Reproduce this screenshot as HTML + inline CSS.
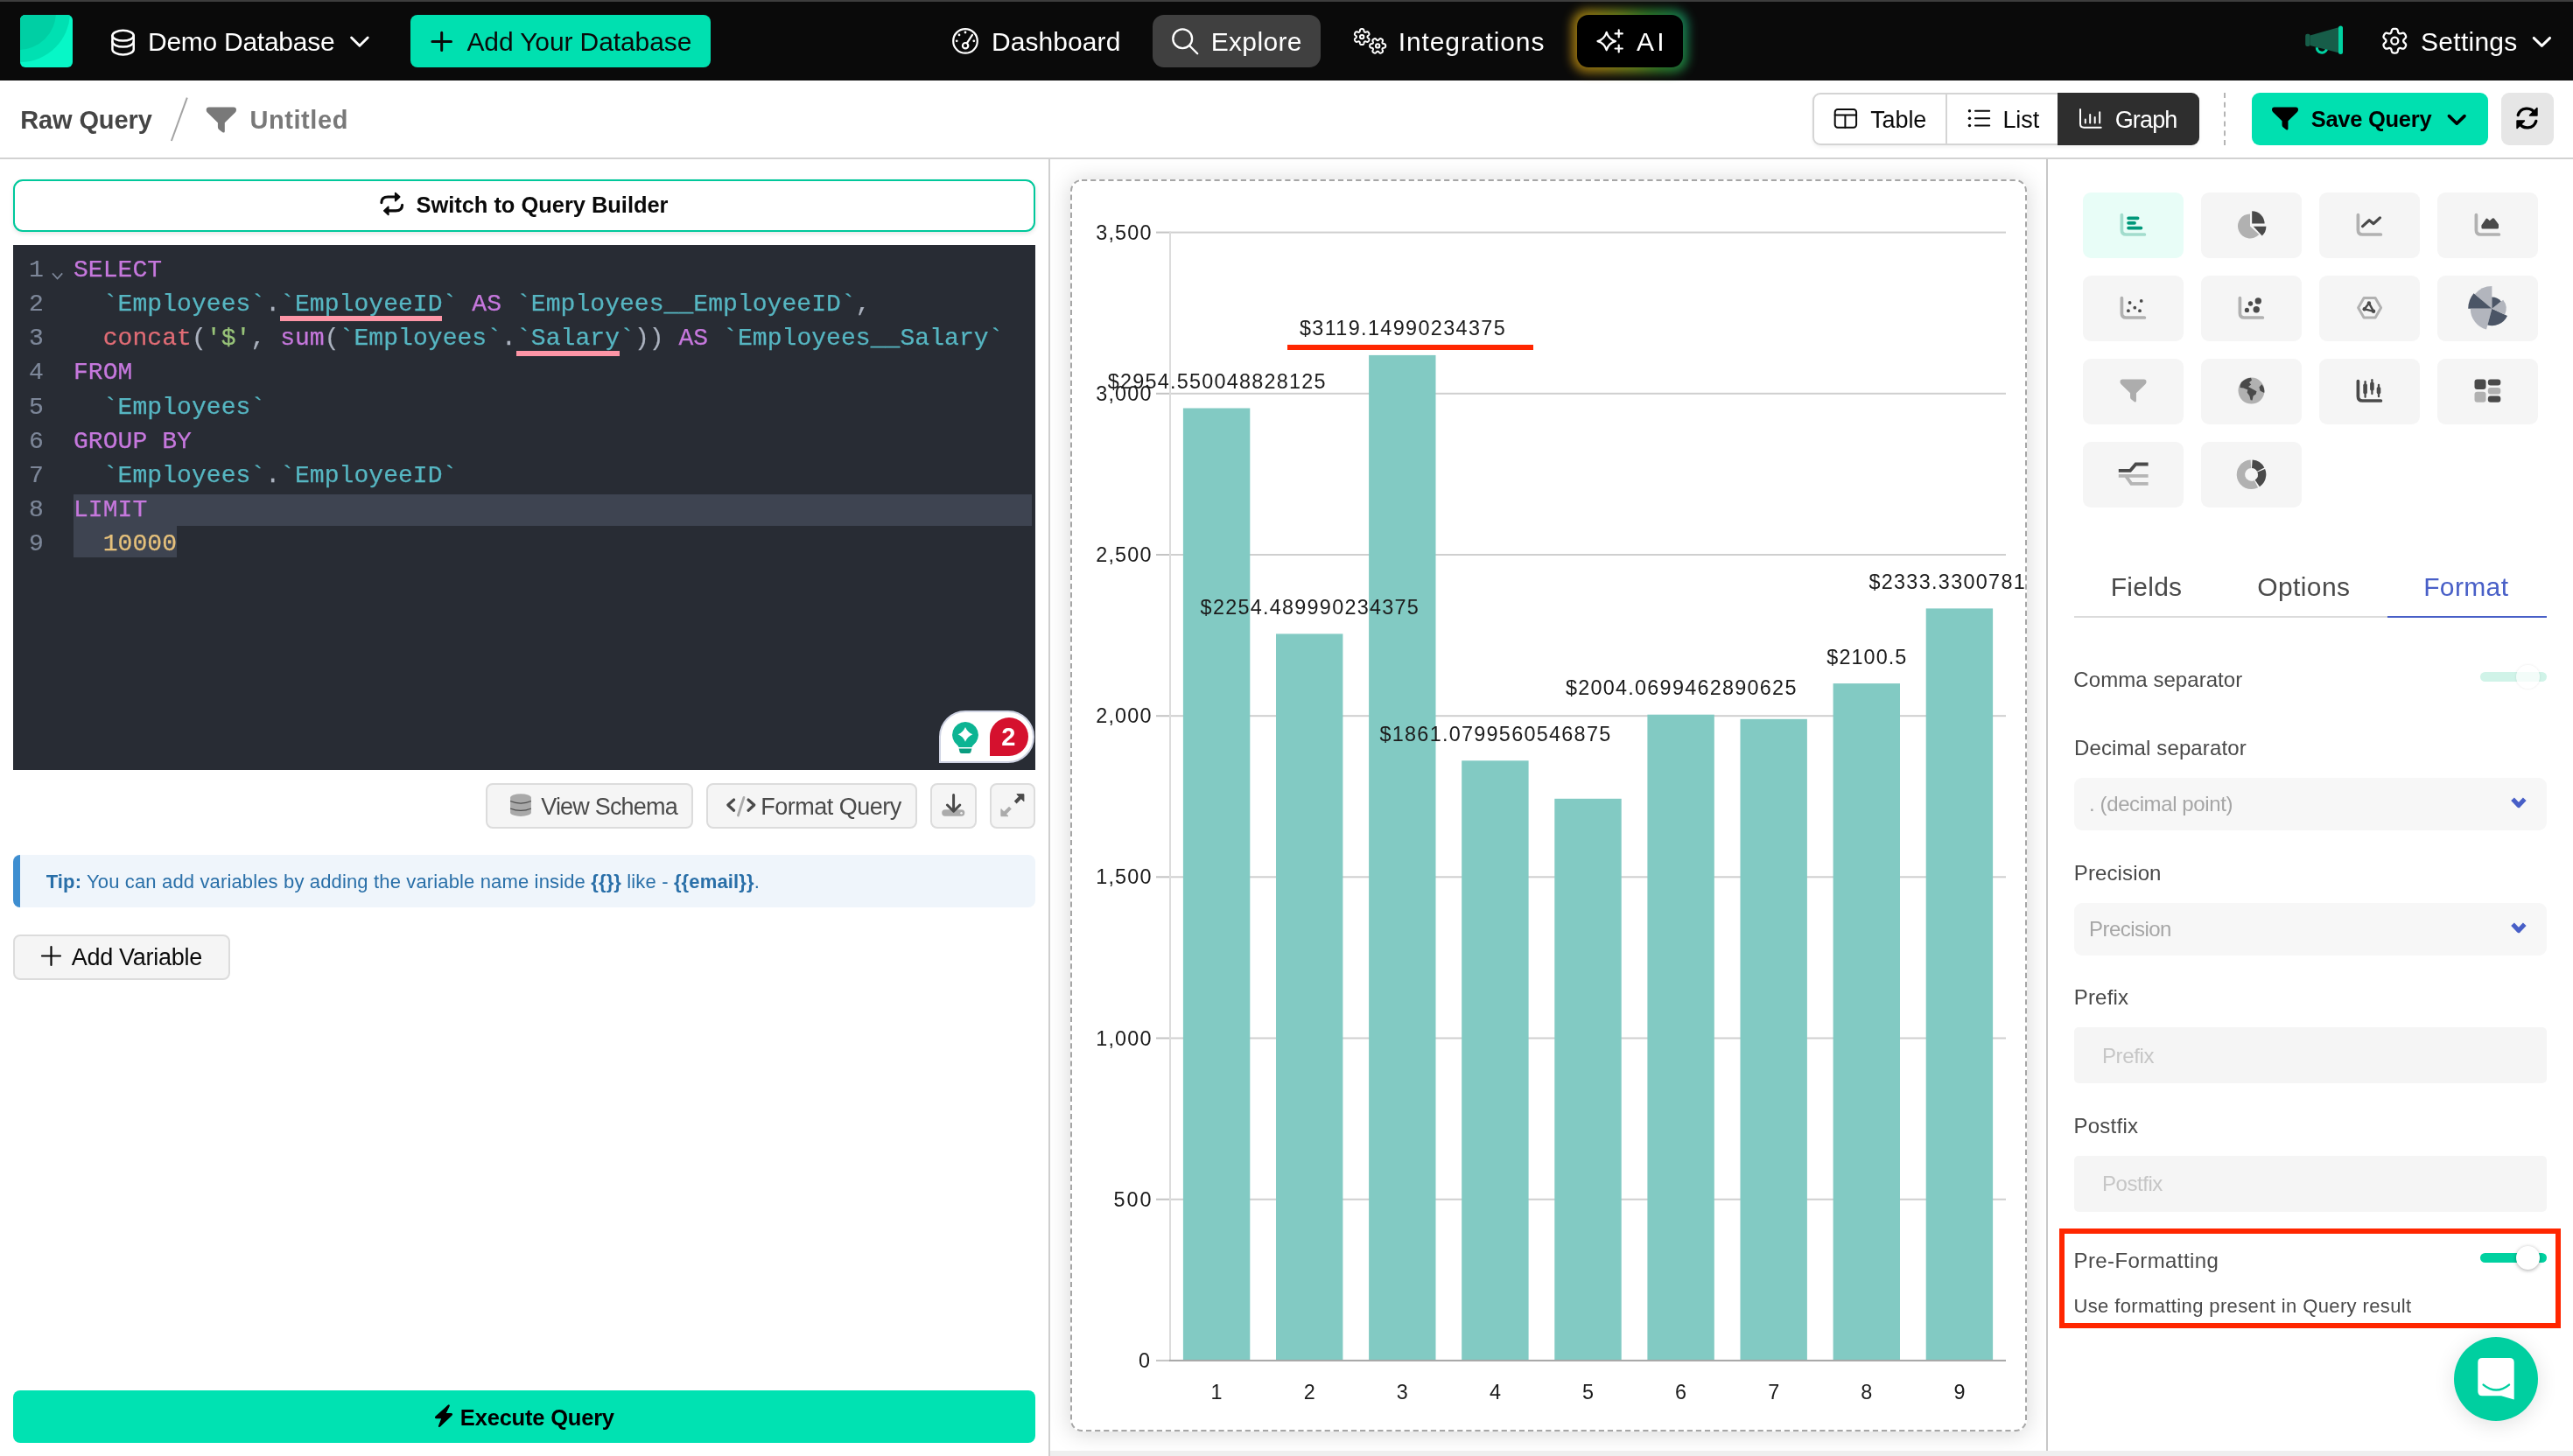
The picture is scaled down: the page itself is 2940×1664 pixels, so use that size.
<!DOCTYPE html>
<html lang="en"><head><meta charset="utf-8"><title>Draxlr - Raw Query</title>
<style>
*{box-sizing:border-box;margin:0;padding:0}
html,body{width:2940px;height:1664px;overflow:hidden;background:#fff}
body{position:relative;will-change:transform;font-family:"Liberation Sans",sans-serif}
div,span,svg,nav,header,section,aside,main,button,label,p,h1,a{position:absolute;display:block}
.t{white-space:pre;line-height:1}
.t b,.t span{position:static;display:inline}
button{border:0;background:none;font:inherit}
</style></head>
<body>
<div style="left:0px;top:0px;width:2940px;height:2px;background:#3d3d3d"></div>
<nav style="left:0px;top:2px;width:2940px;height:90px;background:#0a0a0a"></nav>
<div style="left:23px;top:17px;width:60px;height:60px;border-radius:6px;overflow:hidden;background:#07f7c7"><div style="left:-57px;top:-60px;width:114px;height:114px;border-radius:50%;background:#00e0b2"></div><div style="left:-45px;top:-46px;width:86px;height:86px;border-radius:50%;background:#00cfa4"></div></div>
<span class="t" id="demo" style="left:169.00px;top:32.61px;font:400 30px/1 'Liberation Sans', sans-serif;color:#fff;letter-spacing:-0.268px;">Demo Database</span>
<button style="left:469px;top:17px;width:343px;height:60px;background:#00e0b0;border-radius:8px"></button>
<span class="t" id="adddb" style="left:533.40px;top:32.61px;font:400 30px/1 'Liberation Sans', sans-serif;color:#0a0a0a;letter-spacing:-0.101px;">Add Your Database</span>
<span class="t" id="dash" style="left:1133.00px;top:32.61px;font:400 30px/1 'Liberation Sans', sans-serif;color:#fff;letter-spacing:0.075px;">Dashboard</span>
<div style="left:1317px;top:17px;width:192px;height:60px;background:#404040;border-radius:13px"></div>
<span class="t" id="expl" style="left:1383.70px;top:32.61px;font:400 30px/1 'Liberation Sans', sans-serif;color:#fff;letter-spacing:0.333px;">Explore</span>
<span class="t" id="integ" style="left:1597.70px;top:32.61px;font:400 30px/1 'Liberation Sans', sans-serif;color:#fff;letter-spacing:0.909px;">Integrations</span>
<div style="left:1796px;top:11px;width:133px;height:72px;border-radius:18px;background:linear-gradient(75deg,#c48a10 0%,#b89a16 25%,#86a622 48%,#3a9c32 68%,#1f9a52 88%,#149a80 100%);filter:blur(6px);opacity:.8"></div>
<div style="left:1802px;top:17px;width:121px;height:60px;background:#000;border-radius:13px"></div>
<span class="t" id="ai" style="left:1870.00px;top:32.61px;font:400 30px/1 'Liberation Sans', sans-serif;color:#fff;letter-spacing:3.200px;">AI</span>
<span class="t" id="sett" style="left:2766.10px;top:32.61px;font:400 30px/1 'Liberation Sans', sans-serif;color:#fff;letter-spacing:0.258px;">Settings</span>
<div style="left:0px;top:180px;width:2940px;height:2px;background:#d2d2d2"></div>
<h1 class="t" id="rawq" style="left:23.26px;top:123.45px;font:700 29px/1 'Liberation Sans', sans-serif;color:#454545;letter-spacing:-0.124px;">Raw Query</h1>
<span class="t" id="untl" style="left:285.46px;top:123.45px;font:700 29px/1 'Liberation Sans', sans-serif;color:#797979;letter-spacing:0.571px;">Untitled</span>
<div style="left:2071px;top:106px;width:442px;height:60px;background:#fff;border:2px solid #d4d4d4;border-radius:9px;box-shadow:0 2px 4px rgba(0,0,0,.06)"></div>
<div style="left:2223px;top:108px;width:2px;height:56px;background:#d4d4d4"></div>
<div style="left:2351px;top:106px;width:162px;height:60px;background:#2e2e2e;border-radius:0 9px 9px 0"></div>
<span class="t" id="tabl" style="left:2137.18px;top:123.54px;font:400 27px/1 'Liberation Sans', sans-serif;color:#0a0a0a;letter-spacing:-0.100px;">Table</span>
<span class="t" id="list" style="left:2288.38px;top:123.54px;font:400 27px/1 'Liberation Sans', sans-serif;color:#0a0a0a;letter-spacing:-0.068px;">List</span>
<span class="t" id="grph" style="left:2416.68px;top:123.54px;font:400 27px/1 'Liberation Sans', sans-serif;color:#fff;letter-spacing:-0.850px;">Graph</span>
<div style="left:2541px;top:106px;width:0px;height:60px;border-left:2px dashed #b5b5b5"></div>
<button style="left:2573px;top:106px;width:270px;height:60px;background:#00e0b0;border-radius:9px"></button>
<span class="t" id="save" style="left:2640.67px;top:124.41px;font:700 25.5px/1 'Liberation Sans', sans-serif;color:#000;letter-spacing:-0.267px;">Save Query</span>
<button style="left:2858px;top:106px;width:60px;height:60px;background:#e6e6e6;border-radius:9px"></button>
<div style="left:1198px;top:182px;width:2px;height:1482px;background:#d0d0d0"></div>
<button style="left:15px;top:205px;width:1168px;height:60px;background:#fff;border:2px solid #00c89b;border-radius:11px;box-shadow:0 2px 5px rgba(0,0,0,.10)"></button>
<span class="t" id="swit" style="left:475.47px;top:221.71px;font:700 25.5px/1 'Liberation Sans', sans-serif;color:#0a0a0a;letter-spacing:-0.045px;">Switch to Query Builder</span>
<div style="left:15px;top:280px;width:1168px;height:600px;background:#282c34"></div>
<div style="left:84px;top:565px;width:1095px;height:36px;background:#3e4451"></div>
<div style="left:84px;top:601px;width:118px;height:36px;background:#3e4451"></div>
<span class="t" id="ln1" style="left:33px;top:294.72px;font:400 28px/1 'Liberation Mono', monospace;color:#7d8799;letter-spacing:0.06px;-webkit-text-stroke:0.2px">1</span>
<span class="t" id="cl1" style="left:84px;top:294.72px;font:400 28px/1 'Liberation Mono', monospace;color:#abb2bf;letter-spacing:0.06px;-webkit-text-stroke:0.25px"><span style="color:#c678dd">SELECT</span></span>
<span class="t" id="ln2" style="left:33px;top:333.92px;font:400 28px/1 'Liberation Mono', monospace;color:#7d8799;letter-spacing:0.06px;-webkit-text-stroke:0.2px">2</span>
<span class="t" id="cl2" style="left:84px;top:333.92px;font:400 28px/1 'Liberation Mono', monospace;color:#abb2bf;letter-spacing:0.06px;-webkit-text-stroke:0.25px"><span style="color:#abb2bf">  </span><span style="color:#56b6c2">`Employees`</span><span style="color:#abb2bf">.</span><span style="color:#56b6c2">`EmployeeID`</span><span style="color:#abb2bf"> </span><span style="color:#c678dd">AS</span><span style="color:#abb2bf"> </span><span style="color:#56b6c2">`Employees__EmployeeID`</span><span style="color:#abb2bf">,</span></span>
<span class="t" id="ln3" style="left:33px;top:373.12px;font:400 28px/1 'Liberation Mono', monospace;color:#7d8799;letter-spacing:0.06px;-webkit-text-stroke:0.2px">3</span>
<span class="t" id="cl3" style="left:84px;top:373.12px;font:400 28px/1 'Liberation Mono', monospace;color:#abb2bf;letter-spacing:0.06px;-webkit-text-stroke:0.25px"><span style="color:#abb2bf">  </span><span style="color:#e06c75">concat</span><span style="color:#abb2bf">(</span><span style="color:#98c379">&#x27;$&#x27;</span><span style="color:#abb2bf">, </span><span style="color:#c678dd">sum</span><span style="color:#abb2bf">(</span><span style="color:#56b6c2">`Employees`</span><span style="color:#abb2bf">.</span><span style="color:#56b6c2">`Salary`</span><span style="color:#abb2bf">)) </span><span style="color:#c678dd">AS</span><span style="color:#abb2bf"> </span><span style="color:#56b6c2">`Employees__Salary`</span></span>
<span class="t" id="ln4" style="left:33px;top:412.32px;font:400 28px/1 'Liberation Mono', monospace;color:#7d8799;letter-spacing:0.06px;-webkit-text-stroke:0.2px">4</span>
<span class="t" id="cl4" style="left:84px;top:412.32px;font:400 28px/1 'Liberation Mono', monospace;color:#abb2bf;letter-spacing:0.06px;-webkit-text-stroke:0.25px"><span style="color:#c678dd">FROM</span></span>
<span class="t" id="ln5" style="left:33px;top:451.52px;font:400 28px/1 'Liberation Mono', monospace;color:#7d8799;letter-spacing:0.06px;-webkit-text-stroke:0.2px">5</span>
<span class="t" id="cl5" style="left:84px;top:451.52px;font:400 28px/1 'Liberation Mono', monospace;color:#abb2bf;letter-spacing:0.06px;-webkit-text-stroke:0.25px"><span style="color:#abb2bf">  </span><span style="color:#56b6c2">`Employees`</span></span>
<span class="t" id="ln6" style="left:33px;top:490.72px;font:400 28px/1 'Liberation Mono', monospace;color:#7d8799;letter-spacing:0.06px;-webkit-text-stroke:0.2px">6</span>
<span class="t" id="cl6" style="left:84px;top:490.72px;font:400 28px/1 'Liberation Mono', monospace;color:#abb2bf;letter-spacing:0.06px;-webkit-text-stroke:0.25px"><span style="color:#c678dd">GROUP BY</span></span>
<span class="t" id="ln7" style="left:33px;top:529.92px;font:400 28px/1 'Liberation Mono', monospace;color:#7d8799;letter-spacing:0.06px;-webkit-text-stroke:0.2px">7</span>
<span class="t" id="cl7" style="left:84px;top:529.92px;font:400 28px/1 'Liberation Mono', monospace;color:#abb2bf;letter-spacing:0.06px;-webkit-text-stroke:0.25px"><span style="color:#abb2bf">  </span><span style="color:#56b6c2">`Employees`</span><span style="color:#abb2bf">.</span><span style="color:#56b6c2">`EmployeeID`</span></span>
<span class="t" id="ln8" style="left:33px;top:569.12px;font:400 28px/1 'Liberation Mono', monospace;color:#7d8799;letter-spacing:0.06px;-webkit-text-stroke:0.2px">8</span>
<span class="t" id="cl8" style="left:84px;top:569.12px;font:400 28px/1 'Liberation Mono', monospace;color:#abb2bf;letter-spacing:0.06px;-webkit-text-stroke:0.25px"><span style="color:#c678dd">LIMIT</span></span>
<span class="t" id="ln9" style="left:33px;top:608.32px;font:400 28px/1 'Liberation Mono', monospace;color:#7d8799;letter-spacing:0.06px;-webkit-text-stroke:0.2px">9</span>
<span class="t" id="cl9" style="left:84px;top:608.32px;font:400 28px/1 'Liberation Mono', monospace;color:#abb2bf;letter-spacing:0.06px;-webkit-text-stroke:0.25px"><span style="color:#abb2bf">  </span><span style="color:#e5c07b">10000</span></span>
<div style="left:320.03999999999996px;top:361px;width:185.45999999999998px;height:6px;background:#fd95a6"></div>
<div style="left:589.8px;top:400.5px;width:118.02px;height:6px;background:#fd95a6"></div>
<button style="left:555px;top:895px;width:237px;height:52px;background:#f5f5f5;border:2px solid #dcdcdc;border-radius:8px"></button>
<span class="t" id="vsch" style="left:618.18px;top:908.64px;font:400 27px/1 'Liberation Sans', sans-serif;color:#4a4a4a;letter-spacing:-0.800px;">View Schema</span>
<button style="left:807px;top:895px;width:241px;height:52px;background:#f5f5f5;border:2px solid #dcdcdc;border-radius:8px"></button>
<span class="t" id="fmtq" style="left:869.18px;top:908.64px;font:400 27px/1 'Liberation Sans', sans-serif;color:#4a4a4a;letter-spacing:-0.489px;">Format Query</span>
<button style="left:1063px;top:895px;width:53px;height:52px;background:#f5f5f5;border:2px solid #dcdcdc;border-radius:8px"></button>
<button style="left:1131px;top:895px;width:52px;height:52px;background:#f5f5f5;border:2px solid #dcdcdc;border-radius:8px"></button>
<div style="left:15px;top:977px;width:1168px;height:60px;background:#eff5fb;border-left:8px solid #3e8ed0;border-radius:8px"></div>
<p class="t" id="tip" style="left:52.68px;top:996.98px;font:400 22px/1 'Liberation Sans', sans-serif;color:#296fa8;letter-spacing:0.145px;"><b>Tip:</b> You can add variables by adding the variable name inside <b>{{}}</b> like - <b>{{email}}</b>.</p>
<button style="left:15px;top:1068px;width:248px;height:52px;background:#f5f5f5;border:2px solid #dcdcdc;border-radius:8px"></button>
<span class="t" id="addv" style="left:81.68px;top:1081.14px;font:400 27px/1 'Liberation Sans', sans-serif;color:#0a0a0a;letter-spacing:-0.273px;">Add Variable</span>
<button style="left:15px;top:1589px;width:1168px;height:60px;background:#00e2b2;border-radius:8px"></button>
<span class="t" id="exec" style="left:525.87px;top:1608.11px;font:700 25.5px/1 'Liberation Sans', sans-serif;color:#000;letter-spacing:-0.200px;">Execute Query</span>
<div style="left:1223px;top:205px;width:1093px;height:1431px;background:#fff;border-radius:13px;box-shadow:0 2px 26px rgba(0,0,0,.17)"></div>
<svg class="i" style="left:1223px;top:205px;" width="1093" height="1431" viewBox="1223 205 1093 1431"><rect x="1224" y="206" width="1091" height="1429" rx="12" fill="none" stroke="#a6a6a6" stroke-width="2" stroke-dasharray="6.2 3.9"/></svg>
<div style="left:1200px;top:1658px;width:1740px;height:6px;background:#efefef"></div>
<div style="left:2338px;top:182px;width:2px;height:1476px;background:#c8c8c8"></div>
<div style="left:2340px;top:182px;width:600px;height:1476px;background:#fff"></div>
<svg class="i" style="left:1225px;top:207px;overflow:hidden;border-radius:11px" width="1089" height="1427" viewBox="1225 207 1089 1427"><rect x="1321" y="1553.9" width="16" height="2" fill="#c4c4c4"/><text x="1301.1" y="1562.9" textLength="14.3" lengthAdjust="spacing" font-family="Liberation Sans, sans-serif" font-size="23.4" fill="#1c1c1c">0</text><rect x="1337" y="1369.7" width="955" height="2" fill="#cfcfcf"/><rect x="1321" y="1369.7" width="16" height="2" fill="#c4c4c4"/><text x="1272.5" y="1378.7" textLength="42.9" lengthAdjust="spacing" font-family="Liberation Sans, sans-serif" font-size="23.4" fill="#1c1c1c">500</text><rect x="1337" y="1185.5" width="955" height="2" fill="#cfcfcf"/><rect x="1321" y="1185.5" width="16" height="2" fill="#c4c4c4"/><text x="1252.3" y="1194.5" textLength="63.1" lengthAdjust="spacing" font-family="Liberation Sans, sans-serif" font-size="23.4" fill="#1c1c1c">1,000</text><rect x="1337" y="1001.3" width="955" height="2" fill="#cfcfcf"/><rect x="1321" y="1001.3" width="16" height="2" fill="#c4c4c4"/><text x="1252.3" y="1010.3" textLength="63.1" lengthAdjust="spacing" font-family="Liberation Sans, sans-serif" font-size="23.4" fill="#1c1c1c">1,500</text><rect x="1337" y="817.2" width="955" height="2" fill="#cfcfcf"/><rect x="1321" y="817.2" width="16" height="2" fill="#c4c4c4"/><text x="1252.3" y="826.2" textLength="63.1" lengthAdjust="spacing" font-family="Liberation Sans, sans-serif" font-size="23.4" fill="#1c1c1c">2,000</text><rect x="1337" y="633.0" width="955" height="2" fill="#cfcfcf"/><rect x="1321" y="633.0" width="16" height="2" fill="#c4c4c4"/><text x="1252.3" y="642.0" textLength="63.1" lengthAdjust="spacing" font-family="Liberation Sans, sans-serif" font-size="23.4" fill="#1c1c1c">2,500</text><rect x="1337" y="448.8" width="955" height="2" fill="#cfcfcf"/><rect x="1321" y="448.8" width="16" height="2" fill="#c4c4c4"/><text x="1252.3" y="457.8" textLength="63.1" lengthAdjust="spacing" font-family="Liberation Sans, sans-serif" font-size="23.4" fill="#1c1c1c">3,000</text><rect x="1337" y="264.6" width="955" height="2" fill="#cfcfcf"/><rect x="1321" y="264.6" width="16" height="2" fill="#c4c4c4"/><text x="1252.3" y="273.6" textLength="63.1" lengthAdjust="spacing" font-family="Liberation Sans, sans-serif" font-size="23.4" fill="#1c1c1c">3,500</text><rect x="1336" y="264.5" width="2" height="1290.4" fill="#dcdcdc"/><rect x="1351.9" y="466.5" width="76.4" height="1088.4" fill="#82cac3"/><rect x="1458.0" y="724.4" width="76.4" height="830.5" fill="#82cac3"/><rect x="1564.1" y="405.9" width="76.4" height="1149.0" fill="#82cac3"/><rect x="1670.2" y="869.3" width="76.4" height="685.6" fill="#82cac3"/><rect x="1776.3" y="912.8" width="76.4" height="642.1" fill="#82cac3"/><rect x="1882.4" y="816.7" width="76.4" height="738.2" fill="#82cac3"/><rect x="1988.5" y="821.8" width="76.4" height="733.1" fill="#82cac3"/><rect x="2094.6" y="781.1" width="76.4" height="773.8" fill="#82cac3"/><rect x="2200.7" y="695.4" width="76.4" height="859.5" fill="#82cac3"/><rect x="1336" y="1553.9" width="956" height="2" fill="#a6a6a6"/><text x="1390.1" y="1599" text-anchor="middle" font-family="Liberation Sans, sans-serif" font-size="23.4" fill="#1c1c1c">1</text><text x="1265.7" y="443.9" textLength="248.7" lengthAdjust="spacing" font-family="Liberation Sans, sans-serif" font-size="23.4" fill="#1c1c1c">$2954.550048828125</text><text x="1496.2" y="1599" text-anchor="middle" font-family="Liberation Sans, sans-serif" font-size="23.4" fill="#1c1c1c">2</text><text x="1371.6" y="701.8" textLength="249.2" lengthAdjust="spacing" font-family="Liberation Sans, sans-serif" font-size="23.4" fill="#1c1c1c">$2254.489990234375</text><text x="1602.3" y="1599" text-anchor="middle" font-family="Liberation Sans, sans-serif" font-size="23.4" fill="#1c1c1c">3</text><text x="1484.9" y="383.3" textLength="234.8" lengthAdjust="spacing" font-family="Liberation Sans, sans-serif" font-size="23.4" fill="#1c1c1c">$3119.14990234375</text><text x="1708.4" y="1599" text-anchor="middle" font-family="Liberation Sans, sans-serif" font-size="23.4" fill="#1c1c1c">4</text><text x="1576.5" y="846.7" textLength="263.7" lengthAdjust="spacing" font-family="Liberation Sans, sans-serif" font-size="23.4" fill="#1c1c1c">$1861.0799560546875</text><text x="1814.5" y="1599" text-anchor="middle" font-family="Liberation Sans, sans-serif" font-size="23.4" fill="#1c1c1c">5</text><text x="1920.6" y="1599" text-anchor="middle" font-family="Liberation Sans, sans-serif" font-size="23.4" fill="#1c1c1c">6</text><text x="1788.9" y="794.1" textLength="263.5" lengthAdjust="spacing" font-family="Liberation Sans, sans-serif" font-size="23.4" fill="#1c1c1c">$2004.0699462890625</text><text x="2026.7" y="1599" text-anchor="middle" font-family="Liberation Sans, sans-serif" font-size="23.4" fill="#1c1c1c">7</text><text x="2132.8" y="1599" text-anchor="middle" font-family="Liberation Sans, sans-serif" font-size="23.4" fill="#1c1c1c">8</text><text x="2087.3" y="758.5" textLength="91" lengthAdjust="spacing" font-family="Liberation Sans, sans-serif" font-size="23.4" fill="#1c1c1c">$2100.5</text><text x="2238.9" y="1599" text-anchor="middle" font-family="Liberation Sans, sans-serif" font-size="23.4" fill="#1c1c1c">9</text><text x="2135.4" y="672.8" textLength="207" lengthAdjust="spacing" font-family="Liberation Sans, sans-serif" font-size="23.4" fill="#1c1c1c">$2333.330078125</text><rect x="1471" y="394" width="281" height="6" fill="#ff2600"/></svg>
<div style="left:2380px;top:220px;width:115px;height:75px;background:#e8fdf7;border-radius:9px"></div>
<div style="left:2515px;top:220px;width:115px;height:75px;background:#f5f5f5;border-radius:9px"></div>
<div style="left:2650px;top:220px;width:115px;height:75px;background:#f5f5f5;border-radius:9px"></div>
<div style="left:2785px;top:220px;width:115px;height:75px;background:#f5f5f5;border-radius:9px"></div>
<div style="left:2380px;top:315px;width:115px;height:75px;background:#f5f5f5;border-radius:9px"></div>
<div style="left:2515px;top:315px;width:115px;height:75px;background:#f5f5f5;border-radius:9px"></div>
<div style="left:2650px;top:315px;width:115px;height:75px;background:#f5f5f5;border-radius:9px"></div>
<div style="left:2785px;top:315px;width:115px;height:75px;background:#f5f5f5;border-radius:9px"></div>
<div style="left:2380px;top:410px;width:115px;height:75px;background:#f5f5f5;border-radius:9px"></div>
<div style="left:2515px;top:410px;width:115px;height:75px;background:#f5f5f5;border-radius:9px"></div>
<div style="left:2650px;top:410px;width:115px;height:75px;background:#f5f5f5;border-radius:9px"></div>
<div style="left:2785px;top:410px;width:115px;height:75px;background:#f5f5f5;border-radius:9px"></div>
<div style="left:2380px;top:505px;width:115px;height:75px;background:#f5f5f5;border-radius:9px"></div>
<div style="left:2515px;top:505px;width:115px;height:75px;background:#f5f5f5;border-radius:9px"></div>
<div style="left:2370px;top:704px;width:540px;height:2px;background:#dbdbdb"></div>
<div style="left:2728px;top:704px;width:182px;height:2px;background:#485fc7"></div>
<span class="t" id="tfld" style="left:2411.70px;top:656.21px;font:400 30px/1 'Liberation Sans', sans-serif;color:#4a4a4a;letter-spacing:0.280px;">Fields</span>
<span class="t" id="topt" style="left:2579.20px;top:656.21px;font:400 30px/1 'Liberation Sans', sans-serif;color:#4a4a4a;letter-spacing:0.401px;">Options</span>
<span class="t" id="tfmt" style="left:2769.20px;top:656.21px;font:400 30px/1 'Liberation Sans', sans-serif;color:#485fc7;letter-spacing:0.360px;">Format</span>
<label class="t" id="lcom" style="left:2369.36px;top:764.68px;font:400 24px/1 'Liberation Sans', sans-serif;color:#4a4a4a;letter-spacing:0.057px;">Comma separator</label>
<label class="t" id="ldec" style="left:2369.96px;top:842.68px;font:400 24px/1 'Liberation Sans', sans-serif;color:#4a4a4a;letter-spacing:0.124px;">Decimal separator</label>
<div style="left:2370px;top:889px;width:540px;height:60px;background:#f7f7f7;border-radius:9px"></div>
<span class="t" id="sdec" style="left:2387.06px;top:906.88px;font:400 24px/1 'Liberation Sans', sans-serif;color:#a6a6a6;letter-spacing:-0.399px;">. (decimal point)</span>
<label class="t" id="lpre" style="left:2369.76px;top:985.68px;font:400 24px/1 'Liberation Sans', sans-serif;color:#4a4a4a;letter-spacing:0.125px;">Precision</label>
<div style="left:2370px;top:1032px;width:540px;height:60px;background:#f7f7f7;border-radius:9px"></div>
<span class="t" id="spre" style="left:2387.06px;top:1049.68px;font:400 24px/1 'Liberation Sans', sans-serif;color:#a6a6a6;letter-spacing:-0.552px;">Precision</span>
<label class="t" id="lpfx" style="left:2369.76px;top:1127.68px;font:400 24px/1 'Liberation Sans', sans-serif;color:#4a4a4a;letter-spacing:0.180px;">Prefix</label>
<div style="left:2370px;top:1174px;width:540px;height:64px;background:#f5f5f5;border-radius:5px"></div>
<span class="t" id="ppfx" style="left:2401.96px;top:1195.38px;font:400 24px/1 'Liberation Sans', sans-serif;color:#c6c6c6;letter-spacing:-0.360px;">Prefix</span>
<label class="t" id="lpst" style="left:2369.56px;top:1275.28px;font:400 24px/1 'Liberation Sans', sans-serif;color:#4a4a4a;letter-spacing:0.233px;">Postfix</label>
<div style="left:2370px;top:1321px;width:540px;height:64px;background:#f5f5f5;border-radius:5px"></div>
<span class="t" id="ppst" style="left:2401.96px;top:1340.68px;font:400 24px/1 'Liberation Sans', sans-serif;color:#c6c6c6;letter-spacing:-0.434px;">Postfix</span>
<div style="left:2353px;top:1404px;width:573px;height:114px;border:6px solid #ff2600"></div>
<label class="t" id="lprf" style="left:2369.56px;top:1428.88px;font:400 24px/1 'Liberation Sans', sans-serif;color:#4a4a4a;letter-spacing:0.400px;">Pre-Formatting</label>
<p class="t" id="luse" style="left:2369.48px;top:1481.58px;font:400 22px/1 'Liberation Sans', sans-serif;color:#4a4a4a;letter-spacing:0.378px;">Use formatting present in Query result</p>
<div style="left:2834px;top:768px;width:76px;height:11px;background:#d0f3e8;border-radius:6px"></div>
<div style="left:2875px;top:760px;width:27px;height:27px;background:rgba(255,255,255,.75);border-radius:50%;box-shadow:0 0 3px rgba(0,0,0,.10)"></div>
<div style="left:2834px;top:1431.5px;width:76px;height:11px;background:#00d1a0;border-radius:6px"></div>
<div style="left:2875px;top:1424.2px;width:27px;height:27px;background:#fff;border-radius:50%;box-shadow:0 1px 4px rgba(0,0,0,.35)"></div>
<div style="left:2804px;top:1528px;width:96px;height:96px;background:#00cfa0;border-radius:50%;box-shadow:0 4px 24px rgba(0,0,0,.12)"></div>
<svg class="i" style="left:124px;top:30px;" width="34" height="38" viewBox="124 30 34 38"><g fill="none" stroke="#fff" stroke-linecap="round" stroke-linejoin="round" stroke-width="2.5"><ellipse cx="140.6" cy="40.7" rx="12.15" ry="5.9"/><path d="M128.45,40.7 V56.5 a12.15,5.9 0 0 0 24.3,0 V40.7"/><path d="M128.45,47.6 a12.15,5.9 0 0 0 24.3,0"/></g></svg>
<svg class="i" style="left:396px;top:38px;" width="30" height="20" viewBox="396 38 30 20"><polyline fill="none" stroke="#fff" stroke-linecap="round" stroke-linejoin="round" stroke-width="2.9" points="401.6,43 410.9,52.2 420.2,43"/></svg>
<svg class="i" style="left:488px;top:32px;" width="34" height="32" viewBox="488 32 34 32"><path d="M493.9,47.4 H515.5 M504.7,37.2 V57.6" stroke="#0a0a0a" stroke-width="3" stroke-linecap="round" fill="none"/></svg>
<svg class="i" style="left:1085px;top:29px;" width="36" height="36" viewBox="1085 29 36 36"><g fill="none" stroke="#fff" stroke-linecap="round" stroke-linejoin="round" stroke-width="2.2"><circle cx="1103" cy="46.9" r="13.8"/><circle cx="1103.1" cy="52.2" r="3.2"/><path d="M1104.8,49.4 L1111,39.8"/></g><g fill="#fff"><circle cx="1093.2" cy="46.8" r="1.4"/><circle cx="1096" cy="39.9" r="1.4"/><circle cx="1103" cy="37" r="1.4"/><circle cx="1112.8" cy="46.8" r="1.4"/></g></svg>
<svg class="i" style="left:1336px;top:29px;" width="36" height="36" viewBox="1336 29 36 36"><g fill="none" stroke="#fff" stroke-linecap="round" stroke-linejoin="round" stroke-width="2.3"><circle cx="1351.2" cy="44.2" r="10.9"/><path d="M1359.2,52.2 L1368.2,61.2"/></g></svg>
<svg class="i" style="left:1543px;top:29px;" width="44" height="36" viewBox="1543 29 44 36"><g fill="none" stroke="#fff" stroke-linecap="round" stroke-linejoin="round" stroke-width="2"><path d="M1562.43,42.10 L1562.45,42.32 L1562.50,42.54 L1562.61,42.77 L1562.80,43.03 L1563.11,43.32 L1563.51,43.65 L1563.94,44.03 L1564.27,44.41 L1564.46,44.78 L1564.51,45.13 L1564.49,45.45 L1564.41,45.75 L1564.30,46.05 L1564.17,46.34 L1564.02,46.61 L1563.85,46.88 L1563.67,47.14 L1563.47,47.38 L1563.24,47.60 L1562.98,47.79 L1562.65,47.91 L1562.24,47.93 L1561.74,47.84 L1561.20,47.66 L1560.71,47.47 L1560.30,47.35 L1559.99,47.31 L1559.73,47.33 L1559.51,47.40 L1559.31,47.49 L1559.13,47.62 L1558.97,47.78 L1558.82,47.99 L1558.70,48.28 L1558.60,48.69 L1558.51,49.21 L1558.40,49.77 L1558.23,50.25 L1558.00,50.59 L1557.74,50.81 L1557.44,50.95 L1557.14,51.04 L1556.83,51.09 L1556.51,51.12 L1556.20,51.12 L1555.89,51.12 L1555.57,51.09 L1555.26,51.04 L1554.96,50.95 L1554.66,50.81 L1554.40,50.59 L1554.17,50.25 L1554.00,49.77 L1553.89,49.21 L1553.80,48.69 L1553.70,48.28 L1553.58,47.99 L1553.43,47.78 L1553.27,47.62 L1553.09,47.49 L1552.89,47.40 L1552.67,47.33 L1552.41,47.31 L1552.10,47.35 L1551.69,47.47 L1551.20,47.66 L1550.66,47.84 L1550.16,47.93 L1549.75,47.91 L1549.42,47.79 L1549.16,47.60 L1548.93,47.38 L1548.73,47.14 L1548.55,46.88 L1548.38,46.61 L1548.23,46.34 L1548.10,46.05 L1547.99,45.75 L1547.91,45.45 L1547.89,45.13 L1547.94,44.78 L1548.13,44.41 L1548.46,44.03 L1548.89,43.65 L1549.29,43.32 L1549.60,43.03 L1549.79,42.77 L1549.90,42.54 L1549.95,42.32 L1549.97,42.10 L1549.95,41.88 L1549.90,41.66 L1549.79,41.43 L1549.60,41.17 L1549.29,40.88 L1548.89,40.55 L1548.46,40.17 L1548.13,39.79 L1547.94,39.42 L1547.89,39.07 L1547.91,38.75 L1547.99,38.45 L1548.10,38.15 L1548.23,37.86 L1548.38,37.59 L1548.55,37.32 L1548.73,37.06 L1548.93,36.82 L1549.16,36.60 L1549.42,36.41 L1549.75,36.29 L1550.16,36.27 L1550.66,36.36 L1551.20,36.54 L1551.69,36.73 L1552.10,36.85 L1552.41,36.89 L1552.67,36.87 L1552.89,36.80 L1553.09,36.71 L1553.27,36.58 L1553.43,36.42 L1553.58,36.21 L1553.70,35.92 L1553.80,35.51 L1553.89,34.99 L1554.00,34.43 L1554.17,33.95 L1554.40,33.61 L1554.66,33.39 L1554.96,33.25 L1555.26,33.16 L1555.57,33.11 L1555.89,33.08 L1556.20,33.08 L1556.51,33.08 L1556.83,33.11 L1557.14,33.16 L1557.44,33.25 L1557.74,33.39 L1558.00,33.61 L1558.23,33.95 L1558.40,34.43 L1558.51,34.99 L1558.60,35.51 L1558.70,35.92 L1558.82,36.21 L1558.97,36.42 L1559.13,36.58 L1559.31,36.71 L1559.51,36.80 L1559.73,36.87 L1559.99,36.89 L1560.30,36.85 L1560.71,36.73 L1561.20,36.54 L1561.74,36.36 L1562.24,36.27 L1562.65,36.29 L1562.98,36.41 L1563.24,36.60 L1563.47,36.82 L1563.67,37.06 L1563.85,37.32 L1564.02,37.59 L1564.17,37.86 L1564.30,38.15 L1564.41,38.45 L1564.49,38.75 L1564.51,39.07 L1564.46,39.42 L1564.27,39.79 L1563.94,40.17 L1563.51,40.55 L1563.11,40.88 L1562.80,41.17 L1562.61,41.43 L1562.50,41.66 L1562.45,41.88Z"/><circle cx="1556.2" cy="42.1" r="2.2"/><path d="M1583.22,52.40 L1583.22,52.71 L1583.19,53.03 L1583.14,53.34 L1583.05,53.64 L1582.91,53.94 L1582.69,54.20 L1582.35,54.43 L1581.87,54.60 L1581.31,54.71 L1580.79,54.80 L1580.38,54.90 L1580.09,55.02 L1579.88,55.17 L1579.72,55.33 L1579.59,55.51 L1579.50,55.71 L1579.43,55.93 L1579.41,56.19 L1579.45,56.50 L1579.57,56.91 L1579.76,57.40 L1579.94,57.94 L1580.03,58.44 L1580.01,58.85 L1579.89,59.18 L1579.70,59.44 L1579.48,59.67 L1579.24,59.87 L1578.98,60.05 L1578.71,60.22 L1578.44,60.37 L1578.15,60.50 L1577.85,60.61 L1577.55,60.69 L1577.23,60.71 L1576.88,60.66 L1576.51,60.47 L1576.13,60.14 L1575.75,59.71 L1575.42,59.31 L1575.13,59.00 L1574.87,58.81 L1574.64,58.70 L1574.42,58.65 L1574.20,58.63 L1573.98,58.65 L1573.76,58.70 L1573.53,58.81 L1573.27,59.00 L1572.98,59.31 L1572.65,59.71 L1572.27,60.14 L1571.89,60.47 L1571.52,60.66 L1571.17,60.71 L1570.85,60.69 L1570.55,60.61 L1570.25,60.50 L1569.96,60.37 L1569.69,60.22 L1569.42,60.05 L1569.16,59.87 L1568.92,59.67 L1568.70,59.44 L1568.51,59.18 L1568.39,58.85 L1568.37,58.44 L1568.46,57.94 L1568.64,57.40 L1568.83,56.91 L1568.95,56.50 L1568.99,56.19 L1568.97,55.93 L1568.90,55.71 L1568.81,55.51 L1568.68,55.33 L1568.52,55.17 L1568.31,55.02 L1568.02,54.90 L1567.61,54.80 L1567.09,54.71 L1566.53,54.60 L1566.05,54.43 L1565.71,54.20 L1565.49,53.94 L1565.35,53.64 L1565.26,53.34 L1565.21,53.03 L1565.18,52.71 L1565.18,52.40 L1565.18,52.09 L1565.21,51.77 L1565.26,51.46 L1565.35,51.16 L1565.49,50.86 L1565.71,50.60 L1566.05,50.37 L1566.53,50.20 L1567.09,50.09 L1567.61,50.00 L1568.02,49.90 L1568.31,49.78 L1568.52,49.63 L1568.68,49.47 L1568.81,49.29 L1568.90,49.09 L1568.97,48.87 L1568.99,48.61 L1568.95,48.30 L1568.83,47.89 L1568.64,47.40 L1568.46,46.86 L1568.37,46.36 L1568.39,45.95 L1568.51,45.62 L1568.70,45.36 L1568.92,45.13 L1569.16,44.93 L1569.42,44.75 L1569.69,44.58 L1569.96,44.43 L1570.25,44.30 L1570.55,44.19 L1570.85,44.11 L1571.17,44.09 L1571.52,44.14 L1571.89,44.33 L1572.27,44.66 L1572.65,45.09 L1572.98,45.49 L1573.27,45.80 L1573.53,45.99 L1573.76,46.10 L1573.98,46.15 L1574.20,46.17 L1574.42,46.15 L1574.64,46.10 L1574.87,45.99 L1575.13,45.80 L1575.42,45.49 L1575.75,45.09 L1576.13,44.66 L1576.51,44.33 L1576.88,44.14 L1577.23,44.09 L1577.55,44.11 L1577.85,44.19 L1578.15,44.30 L1578.44,44.43 L1578.71,44.58 L1578.98,44.75 L1579.24,44.93 L1579.48,45.13 L1579.70,45.36 L1579.89,45.62 L1580.01,45.95 L1580.03,46.36 L1579.94,46.86 L1579.76,47.40 L1579.57,47.89 L1579.45,48.30 L1579.41,48.61 L1579.43,48.87 L1579.50,49.09 L1579.59,49.29 L1579.72,49.47 L1579.88,49.63 L1580.09,49.78 L1580.38,49.90 L1580.79,50.00 L1581.31,50.09 L1581.87,50.20 L1582.35,50.37 L1582.69,50.60 L1582.91,50.86 L1583.05,51.16 L1583.14,51.46 L1583.19,51.77 L1583.22,52.09Z"/><circle cx="1574.2" cy="52.4" r="2.2"/></g></svg>
<svg class="i" style="left:1821px;top:30px;" width="38" height="34" viewBox="1821 30 38 34"><g fill="none" stroke="#fff" stroke-linecap="round" stroke-linejoin="round" stroke-width="2.2"><path d="M1835.70,36.90 Q1837.94,44.86 1845.90,47.10 Q1837.94,49.34 1835.70,57.30 Q1833.46,49.34 1825.50,47.10 Q1833.46,44.86 1835.70,36.90Z"/><path d="M1849.7,34.4 V42.4 M1845.6,38.4 H1853.8 M1849.7,51.5 V59.5 M1845.6,55.5 H1853.8"/></g></svg>
<svg class="i" style="left:2630px;top:26px;" width="52" height="40" viewBox="2630 26 52 40"><path d="M2639.5,40.5 L2673,31 V60.5 L2639.5,52Z" fill="#175d49"/><rect x="2634.2" y="38.8" width="5.4" height="14.2" rx="2.2" fill="#175d49"/><path d="M2647.3,54.3 a5.8,5.8 0 0 0 11.2,2.2" fill="none" stroke="#00d3a2" stroke-width="3.1"/><rect x="2672" y="29.5" width="5" height="32.5" rx="2.5" fill="#00d3a2"/></svg>
<svg class="i" style="left:2718px;top:28px;" width="38" height="38" viewBox="2718 28 38 38"><g fill="none" stroke="#fff" stroke-linecap="round" stroke-linejoin="round" stroke-width="2.3"><path d="M2746.16,46.70 L2746.18,47.05 L2746.26,47.40 L2746.41,47.76 L2746.69,48.16 L2747.13,48.61 L2747.71,49.13 L2748.32,49.70 L2748.79,50.28 L2749.05,50.84 L2749.13,51.37 L2749.08,51.86 L2748.95,52.33 L2748.78,52.79 L2748.58,53.23 L2748.35,53.65 L2748.09,54.07 L2747.81,54.47 L2747.51,54.84 L2747.16,55.19 L2746.76,55.48 L2746.27,55.67 L2745.65,55.73 L2744.91,55.61 L2744.11,55.37 L2743.37,55.12 L2742.76,54.97 L2742.28,54.93 L2741.88,54.98 L2741.54,55.09 L2741.23,55.24 L2740.94,55.43 L2740.68,55.67 L2740.44,55.99 L2740.23,56.43 L2740.06,57.03 L2739.91,57.80 L2739.72,58.61 L2739.44,59.31 L2739.09,59.82 L2738.67,60.14 L2738.22,60.35 L2737.75,60.48 L2737.27,60.55 L2736.79,60.59 L2736.30,60.61 L2735.81,60.59 L2735.33,60.55 L2734.85,60.48 L2734.38,60.35 L2733.93,60.14 L2733.51,59.82 L2733.16,59.31 L2732.88,58.61 L2732.69,57.80 L2732.54,57.03 L2732.37,56.43 L2732.16,55.99 L2731.92,55.67 L2731.66,55.43 L2731.37,55.24 L2731.06,55.09 L2730.72,54.98 L2730.32,54.93 L2729.84,54.97 L2729.23,55.12 L2728.49,55.37 L2727.69,55.61 L2726.95,55.73 L2726.33,55.67 L2725.84,55.48 L2725.44,55.19 L2725.09,54.84 L2724.79,54.47 L2724.51,54.07 L2724.25,53.65 L2724.02,53.23 L2723.82,52.79 L2723.65,52.33 L2723.52,51.86 L2723.47,51.37 L2723.55,50.84 L2723.81,50.28 L2724.28,49.70 L2724.89,49.13 L2725.47,48.61 L2725.91,48.16 L2726.19,47.76 L2726.34,47.40 L2726.42,47.05 L2726.44,46.70 L2726.42,46.35 L2726.34,46.00 L2726.19,45.64 L2725.91,45.24 L2725.47,44.79 L2724.89,44.27 L2724.28,43.70 L2723.81,43.12 L2723.55,42.56 L2723.47,42.03 L2723.52,41.54 L2723.65,41.07 L2723.82,40.61 L2724.02,40.17 L2724.25,39.75 L2724.51,39.33 L2724.79,38.93 L2725.09,38.56 L2725.44,38.21 L2725.84,37.92 L2726.33,37.73 L2726.95,37.67 L2727.69,37.79 L2728.49,38.03 L2729.23,38.28 L2729.84,38.43 L2730.32,38.47 L2730.72,38.42 L2731.06,38.31 L2731.37,38.16 L2731.66,37.97 L2731.92,37.73 L2732.16,37.41 L2732.37,36.97 L2732.54,36.37 L2732.69,35.60 L2732.88,34.79 L2733.16,34.09 L2733.51,33.58 L2733.93,33.26 L2734.38,33.05 L2734.85,32.92 L2735.33,32.85 L2735.81,32.81 L2736.30,32.79 L2736.79,32.81 L2737.27,32.85 L2737.75,32.92 L2738.22,33.05 L2738.67,33.26 L2739.09,33.58 L2739.44,34.09 L2739.72,34.79 L2739.91,35.60 L2740.06,36.37 L2740.23,36.97 L2740.44,37.41 L2740.68,37.73 L2740.94,37.97 L2741.23,38.16 L2741.54,38.31 L2741.88,38.42 L2742.28,38.47 L2742.76,38.43 L2743.37,38.28 L2744.11,38.03 L2744.91,37.79 L2745.65,37.67 L2746.27,37.73 L2746.76,37.92 L2747.16,38.21 L2747.51,38.56 L2747.81,38.93 L2748.09,39.33 L2748.35,39.75 L2748.58,40.17 L2748.78,40.61 L2748.95,41.07 L2749.08,41.54 L2749.13,42.03 L2749.05,42.56 L2748.79,43.12 L2748.32,43.70 L2747.71,44.27 L2747.13,44.79 L2746.69,45.24 L2746.41,45.64 L2746.26,46.00 L2746.18,46.35Z" stroke-linejoin="round"/><circle cx="2736.3" cy="46.7" r="4.0"/></g></svg>
<svg class="i" style="left:2889px;top:38px;" width="30" height="20" viewBox="2889 38 30 20"><polyline fill="none" stroke="#fff" stroke-linecap="round" stroke-linejoin="round" stroke-width="2.9" points="2895.2,43.4 2904.4,52.4 2913.6,43.4"/></svg>
<svg class="i" style="left:190px;top:106px;" width="30" height="60" viewBox="190 106 30 60"><path d="M213.8,111.7 L195.9,161" stroke="#a3a3a3" stroke-width="2" fill="none"/></svg>
<svg class="i" style="left:233px;top:120px;" width="40" height="35" viewBox="233 120 40 35"><path d="M235.70,125.66 Q235.70,122.40 238.79,122.40 H266.91 Q270.00,122.40 270.00,125.66 Q270.00,127.14 268.80,128.47 L256.79,140.16 V149.93 Q256.79,152.59 254.03,150.96 L250.09,148.00 Q248.91,146.97 248.91,145.19 V140.16 L236.90,128.47 Q235.70,127.14 235.70,125.66Z" fill="#797979"/></svg>
<svg class="i" style="left:2093px;top:121px;" width="32" height="29" viewBox="2093 121 32 29"><g fill="none" stroke="#0a0a0a" stroke-linecap="round" stroke-linejoin="round" stroke-width="2"><rect x="2096.7" y="125" width="24.4" height="20.7" rx="3.2"/><path d="M2096.7,131.5 H2121.1 M2108.4,131.5 V145.7"/></g></svg>
<svg class="i" style="left:2246px;top:122px;" width="31" height="26" viewBox="2246 122 31 26"><g fill="none" stroke="#0a0a0a" stroke-linecap="round" stroke-linejoin="round" stroke-width="2"><path d="M2257,126.7 H2273.2 M2257,135.2 H2273.2 M2257,143.5 H2273.2"/></g><g fill="#0a0a0a"><circle cx="2250.5" cy="126.7" r="1.7"/><circle cx="2250.5" cy="135.2" r="1.7"/><circle cx="2250.5" cy="143.5" r="1.7"/></g></svg>
<svg class="i" style="left:2373px;top:121px;" width="32" height="29" viewBox="2373 121 32 29"><g fill="none" stroke="#fff" stroke-linecap="round" stroke-linejoin="round" stroke-width="2"><path d="M2377,125 V141.5 Q2377,145.7 2381.2,145.7 H2400.7"/><path d="M2382.8,136.4 V140.6 M2388.2,131 V140.6 M2393.7,133.9 V140.6 M2399.2,128.2 V140.6"/></g></svg>
<svg class="i" style="left:2593px;top:120px;" width="36" height="32" viewBox="2593 120 36 32"><path d="M2596.00,125.48 Q2596.00,122.60 2598.70,122.60 H2623.30 Q2626.00,122.60 2626.00,125.48 Q2626.00,126.79 2624.95,127.97 L2614.45,138.32 V146.97 Q2614.45,149.32 2612.03,147.88 L2608.59,145.26 Q2607.55,144.35 2607.55,142.77 V138.32 L2597.05,127.97 Q2596.00,126.79 2596.00,125.48Z" fill="#000"/></svg>
<svg class="i" style="left:2792px;top:127px;" width="30" height="20" viewBox="2792 127 30 20"><polyline fill="none" stroke="#000" stroke-width="3.6" stroke-linecap="round" stroke-linejoin="round" points="2798.4,132.6 2807.2,141.2 2816,132.6"/></svg>
<svg class="i" style="left:2872px;top:120px;" width="32" height="30" viewBox="2872 120 32 30"><g fill="none" stroke="#000" stroke-width="3.3" stroke-linecap="round" stroke-linejoin="round"><path d="M2877.2,131.6 A10.6,10.6 0 0 1 2896.6,129.6"/><path d="M2897.8,138.4 A10.6,10.6 0 0 1 2878.4,140.4"/></g><path d="M2898.9,123.6 V131.9 H2890.6Z M2876.1,146.4 V138.1 H2884.4Z" fill="#000" stroke="#000" stroke-width="1.6" stroke-linejoin="round"/></svg>
<svg class="i" style="left:431px;top:217px;" width="34" height="32" viewBox="431 217 34 32"><g fill="none" stroke="#0a0a0a" stroke-width="3.1" stroke-linecap="round" stroke-linejoin="round"><path d="M435.9,231.6 Q435.9,225 443.4,225 H452"/><path d="M459.6,234.3 Q459.6,240.9 452.1,240.9 H443.5"/></g><path d="M451.8,220.6 L456.6,225 L451.8,229.6Z M443.7,236.4 L438.9,240.9 L443.7,245.4Z" fill="#0a0a0a" stroke="#0a0a0a" stroke-width="1.8" stroke-linejoin="round"/></svg>
<svg class="i" style="left:56px;top:308px;" width="20" height="16" viewBox="56 308 20 16"><polyline fill="none" stroke="#7d8799" stroke-width="1.7" points="60,312.4 65.6,318.6 71.2,312.4"/></svg>
<div style="left:1073px;top:812px;width:109px;height:60px;background:#fff;border:2px solid #cfd3e3;border-radius:30px 30px 30px 0"></div>
<svg class="i" style="left:1085px;top:821px;" width="36" height="44" viewBox="1085 821 36 44"><path d="M1103,824.9 a14.9,14.9 0 0 1 9.2,26.6 q-1.6,1.3 -1.6,2.6 h-15.2 q0,-1.3 -1.6,-2.6 A14.9,14.9 0 0 1 1103,824.9Z" fill="#0cb493"/><path d="M1095.6,855.6 h14.8 l-1,3.6 q-0.6,1.9 -2.6,1.9 h-7.6 q-2,0 -2.6,-1.9Z" fill="#0a9d80"/><path d="M1103.00,830.90 Q1105.52,836.78 1111.40,839.30 Q1105.52,841.82 1103.00,847.70 Q1100.48,841.82 1094.60,839.30 Q1100.48,836.78 1103.00,830.90Z" fill="#fff"/></svg>
<div style="left:1131px;top:820px;width:44px;height:44px;background:#d5112e;border-radius:22px 22px 22px 0"></div>
<span class="t" id="two" style="left:1144.26px;top:828.15px;font:700 29px/1 'Liberation Sans', sans-serif;color:#fff;letter-spacing:0.000px;">2</span>
<svg class="i" style="left:581px;top:905px;" width="28" height="30" viewBox="581 905 28 30"><path d="M583.1,911.6 a11.9,4.4 0 0 1 23.8,0 V928.5 a11.9,4.4 0 0 1 -23.8,0Z" fill="#a9a9a9"/><path d="M583.1,915.6 q11.9,5 23.8,0 M583.1,923.9 q11.9,5 23.8,0" fill="none" stroke="#4d4d4d" stroke-width="1.1"/></svg>
<svg class="i" style="left:827px;top:905px;" width="40" height="30" viewBox="827 905 40 30"><g fill="none" stroke="#4a4a4a" stroke-width="3.2" stroke-linecap="round" stroke-linejoin="round"><path d="M838.6,914 L831.8,920 L838.6,926.2"/><path d="M855,914 L861.8,920 L855,926.2"/></g><path d="M850,911.4 L843.4,932" stroke="#ababab" stroke-width="2.8" stroke-linecap="round" fill="none"/></svg>
<svg class="i" style="left:1073px;top:904px;" width="33" height="32" viewBox="1073 904 33 32"><rect x="1076.2" y="925.3" width="26.1" height="7.5" rx="3.7" fill="#ababab"/><circle cx="1098.5" cy="929.2" r="1.2" fill="#f5f5f5"/><path d="M1089.6,908.4 V926.6 M1082.4,920 L1089.6,927.2 L1096.8,920" fill="none" stroke="#4a4a4a" stroke-width="3" stroke-linecap="round" stroke-linejoin="round"/></svg>
<svg class="i" style="left:1141px;top:905px;" width="32" height="31" viewBox="1141 905 32 31"><path d="M1160.2,917 L1167.5,909.7" stroke="#4a4a4a" stroke-width="4" fill="none"/><path d="M1161.9,907.7 H1169.9 V915.7Z" fill="#4a4a4a" stroke="#4a4a4a" stroke-width="1" stroke-linejoin="round"/><path d="M1154.4,923.2 L1146.5,931" stroke="#ababab" stroke-width="4" fill="none"/><path d="M1143.9,924.6 V932.7 H1152Z" fill="#ababab" stroke="#ababab" stroke-width="1" stroke-linejoin="round"/></svg>
<svg class="i" style="left:45px;top:1079px;" width="27" height="27" viewBox="45 1079 27 27"><path d="M48,1092.5 H69 M58.5,1082 V1103" stroke="#0a0a0a" stroke-width="2.2" stroke-linecap="round" fill="none"/></svg>
<svg class="i" style="left:494px;top:1603px;" width="26" height="31" viewBox="494 1603 26 31"><path d="M512.2,1606.2 L497.8,1619.3 Q497,1620.6 498.6,1620.6 H505 L501.6,1629.6 Q501.4,1630.9 502.6,1630 L516.2,1617 Q517,1615.7 515.4,1615.7 H508.8 L513.2,1606.8 Q513.4,1605.4 512.2,1606.2Z" fill="#000" stroke="#000" stroke-width="1.2" stroke-linejoin="round"/></svg>
<svg class="i" style="left:2380px;top:220px" width="115" height="75" viewBox="2380 220 115 75"><path d="M2424.40,245.50 V263.00 Q2424.40,268.00 2429.40,268.00 H2450.40" fill="none" stroke="#a2dccd" stroke-width="3.7" stroke-linecap="round"/><path d="M2432.1,249.3 H2442.6 M2432.1,254.8 H2439 M2432.1,260.6 H2446.4" stroke="#00987a" stroke-width="3.8" stroke-linecap="round" fill="none"/></svg>
<svg class="i" style="left:2515px;top:220px" width="115" height="75" viewBox="2515 220 115 75"><path d="M2571.00,258.40 L2581.24,267.95 A14,14 0 1 1 2571.00,244.40Z" fill="#b1b1b1"/><path d="M2573.20,255.60 L2573.20,241.20 A14.4,14.4 0 0 1 2587.60,255.60Z" fill="#4a4a4a"/><path d="M2574.80,258.80 L2589.40,258.80 A14.6,14.6 0 0 1 2584.76,269.48Z" fill="#4a4a4a"/></svg>
<svg class="i" style="left:2650px;top:220px" width="115" height="75" viewBox="2650 220 115 75"><path d="M2694.40,245.50 V263.00 Q2694.40,268.00 2699.40,268.00 H2720.40" fill="none" stroke="#b1b1b1" stroke-width="3.7" stroke-linecap="round"/><polyline points="2699.6,258.6 2707.2,251.7 2712.1,255.7 2719.4,248.9" fill="none" stroke="#4a4a4a" stroke-width="3.2" stroke-linecap="round" stroke-linejoin="round"/></svg>
<svg class="i" style="left:2785px;top:220px" width="115" height="75" viewBox="2785 220 115 75"><path d="M2829.40,245.50 V263.00 Q2829.40,268.00 2834.40,268.00 H2855.40" fill="none" stroke="#b1b1b1" stroke-width="3.7" stroke-linecap="round"/><path d="M2835.4,260 V257.6 L2840.6,250 Q2841.4,249 2842.4,250 L2844.8,252.2 L2848,249.6 Q2849.2,248.8 2850.2,250 L2855,256.4 V260 Q2855,261.6 2853.4,261.6 H2837 Q2835.4,261.6 2835.4,260Z" fill="#4a4a4a"/></svg>
<svg class="i" style="left:2380px;top:315px" width="115" height="75" viewBox="2380 315 115 75"><path d="M2424.40,340.50 V358.00 Q2424.40,363.00 2429.40,363.00 H2450.40" fill="none" stroke="#b1b1b1" stroke-width="3.7" stroke-linecap="round"/><circle cx="2433.6" cy="346" r="1.9" fill="#4a4a4a"/><circle cx="2446.7" cy="343.9" r="1.9" fill="#4a4a4a"/><circle cx="2439.3" cy="351.7" r="1.9" fill="#4a4a4a"/><circle cx="2431.9" cy="355.2" r="1.9" fill="#4a4a4a"/><circle cx="2445" cy="355.2" r="1.9" fill="#4a4a4a"/></svg>
<svg class="i" style="left:2515px;top:315px" width="115" height="75" viewBox="2515 315 115 75"><path d="M2559.40,340.50 V358.00 Q2559.40,363.00 2564.40,363.00 H2585.40" fill="none" stroke="#b1b1b1" stroke-width="3.7" stroke-linecap="round"/><circle cx="2580.3" cy="343.9" r="3.7" fill="#4a4a4a"/><circle cx="2571.5" cy="347" r="2.7" fill="#4a4a4a"/><circle cx="2578.2" cy="353.8" r="3.7" fill="#4a4a4a"/><circle cx="2567.4" cy="354.4" r="2.6" fill="#4a4a4a"/></svg>
<svg class="i" style="left:2650px;top:315px" width="115" height="75" viewBox="2650 315 115 75"><polygon points="2720.60,351.80 2714.10,363.06 2701.10,363.06 2694.60,351.80 2701.10,340.54 2714.10,340.54" fill="none" stroke="#b1b1b1" stroke-width="3" stroke-linejoin="round"/><path d="M2706.9,346.4 L2701.7,353.2 L2712.1,355.8Z" fill="none" stroke="#4a4a4a" stroke-width="2.4" stroke-linejoin="round"/><circle cx="2706.9" cy="346.4" r="2.2" fill="#4a4a4a"/><circle cx="2701.7" cy="353.2" r="2.2" fill="#4a4a4a"/><circle cx="2712.1" cy="355.8" r="2.2" fill="#4a4a4a"/></svg>
<svg class="i" style="left:2785px;top:315px" width="115" height="75" viewBox="2785 315 115 75"><path d="M2847.40,352.70 L2827.79,336.24 A25.6,25.6 0 0 1 2847.40,327.10Z" fill="#b2b5bd"/><path d="M2847.40,352.70 L2820.20,352.70 A27.2,27.2 0 0 1 2826.56,335.22Z" fill="#4b5566"/><path d="M2847.40,352.70 L2841.03,376.46 A24.6,24.6 0 0 1 2822.80,352.70Z" fill="#b2b5bd"/><path d="M2847.40,352.70 L2864.98,360.90 A19.4,19.4 0 0 1 2842.38,371.44Z" fill="#4b5566"/><path d="M2847.40,352.70 L2860.17,342.73 A16.2,16.2 0 0 1 2862.08,359.55Z" fill="#b2b5bd"/><path d="M2847.40,352.70 L2847.40,339.50 A13.2,13.2 0 0 1 2857.80,344.57Z" fill="#4b5566"/></svg>
<svg class="i" style="left:2380px;top:410px" width="115" height="75" viewBox="2380 410 115 75"><path d="M2422.50,436.48 Q2422.50,433.60 2425.20,433.60 H2449.80 Q2452.50,433.60 2452.50,436.48 Q2452.50,437.79 2451.45,438.97 L2440.95,449.32 V457.97 Q2440.95,460.32 2438.53,458.88 L2435.09,456.26 Q2434.05,455.35 2434.05,453.77 V449.32 L2423.55,438.97 Q2422.50,437.79 2422.50,436.48Z" fill="#adadad"/></svg>
<svg class="i" style="left:2515px;top:410px" width="115" height="75" viewBox="2515 410 115 75"><circle cx="2572.5" cy="446.6" r="15" fill="#b1b1b1"/><path d="M2561,437 Q2565.5,432.4 2572,431.7 L2573,434.5 L2570,437 L2572.2,439.6 L2569,442 L2573.5,444.6 L2578.5,447.2 L2577.6,450.6 L2574.6,452.6 L2573.6,457.4 L2571.6,457.2 L2570.4,452.4 L2567.6,448.6 L2568.4,445.6 L2563.6,443.6 L2559.6,443 Q2559.4,439.4 2561,437Z" fill="#4a4a4a"/><path d="M2584.4,439.2 L2581.4,442.4 L2582.6,446.8 L2587.2,449 Q2588,444 2584.4,439.2Z" fill="#4a4a4a"/></svg>
<svg class="i" style="left:2650px;top:410px" width="115" height="75" viewBox="2650 410 115 75"><path d="M2694.40,435.50 V453.00 Q2694.40,458.00 2699.40,458.00 H2720.40" fill="none" stroke="#4a4a4a" stroke-width="3.7" stroke-linecap="round"/><path d="M2702.6,436.2 V453.8" stroke="#4a4a4a" stroke-width="2.3" stroke-linecap="round"/><rect x="2700.2999999999997" y="438.6" width="4.6" height="11.6" rx="1.6" fill="#4a4a4a"/><path d="M2710.4,434.2 V450" stroke="#4a4a4a" stroke-width="2.3" stroke-linecap="round"/><rect x="2708.1" y="436.8" width="4.6" height="9.6" rx="1.6" fill="#4a4a4a"/><path d="M2718,439.8 V453.2" stroke="#4a4a4a" stroke-width="2.3" stroke-linecap="round"/><rect x="2715.7" y="442.2" width="4.6" height="8.0" rx="1.6" fill="#4a4a4a"/></svg>
<svg class="i" style="left:2785px;top:410px" width="115" height="75" viewBox="2785 410 115 75"><rect x="2827.5" y="433.6" width="13" height="11.5" rx="3" fill="#4a4a4a"/><rect x="2827.5" y="447.8" width="13" height="12" rx="3" fill="#b1b1b1"/><rect x="2842.8" y="433.6" width="14.5" height="6.9" rx="3" fill="#4a4a4a"/><rect x="2842.8" y="443.1" width="14.5" height="7.3" rx="3" fill="#b1b1b1"/><rect x="2842.8" y="452.6" width="14.5" height="7.2" rx="3" fill="#4a4a4a"/></svg>
<svg class="i" style="left:2380px;top:505px" width="115" height="75" viewBox="2380 505 115 75"><path d="M2420.8,543.8 H2454.6 M2429,543.8 L2435.4,552.8 H2454.6" fill="none" stroke="#b5b5b5" stroke-width="3.8"/><path d="M2420.8,537.9 H2434 L2440.4,530.5 H2454.6" fill="none" stroke="#4a4a4a" stroke-width="3.8"/></svg>
<svg class="i" style="left:2515px;top:505px" width="115" height="75" viewBox="2515 505 115 75"><path d="M2580.13,557.27 A16.8,16.8 0 1 1 2571.62,525.52 L2572.11,534.91 A7.4,7.4 0 1 0 2575.86,548.89Z" fill="#b1b1b1"/><path d="M2573.67,525.54 A16.8,16.8 0 0 1 2587.33,534.41 L2579.03,538.83 A7.4,7.4 0 0 0 2573.02,534.92Z" fill="#4a4a4a"/><path d="M2588.08,536.01 A16.8,16.8 0 0 1 2581.89,556.23 L2576.64,548.43 A7.4,7.4 0 0 0 2579.36,539.53Z" fill="#4a4a4a"/></svg>
<svg class="i" style="left:2866px;top:907px;" width="25" height="22" viewBox="2866 907 25 22"><polyline points="2871.05,913.35 2877.9,920.6 2884.75,913.35" fill="none" stroke="#485fc7" stroke-width="5.1" stroke-linecap="butt" stroke-linejoin="round"/></svg>
<svg class="i" style="left:2866px;top:1050px;" width="25" height="22" viewBox="2866 1050 25 22"><polyline points="2871.05,1056.35 2877.9,1063.6 2884.75,1056.35" fill="none" stroke="#485fc7" stroke-width="5.1" stroke-linecap="butt" stroke-linejoin="round"/></svg>
<svg class="i" style="left:2828px;top:1549px;" width="48" height="54" viewBox="2828 1549 48 54"><path d="M2836.3,1552.1 H2867.7 Q2872.7,1552.1 2872.7,1557.1 V1599.4 L2858,1595.2 H2836.3 Q2831.3,1595.2 2831.3,1590.2 V1557.1 Q2831.3,1552.1 2836.3,1552.1Z" fill="#fff"/><path d="M2837.6,1582.6 Q2852.3,1594.6 2867,1582.6" fill="none" stroke="#00cfa0" stroke-width="2.4" stroke-linecap="round"/></svg>
</body></html>
